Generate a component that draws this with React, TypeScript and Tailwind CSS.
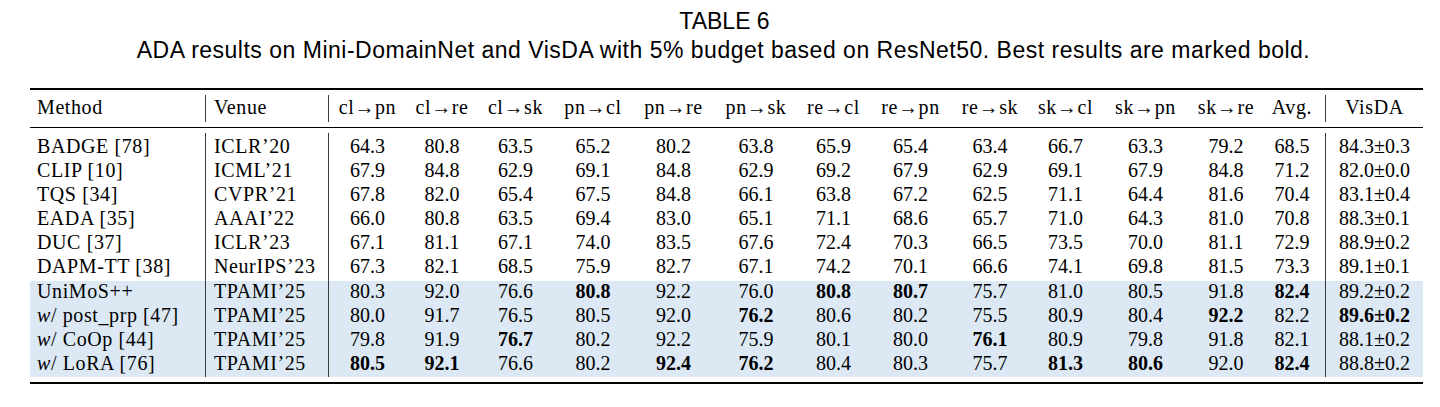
import { ReactNode } from "react";

type Row = {
	method: ReactNode;
	venue: string;
	vals: string[];
	hl?: boolean;
};

const cols =
	"grid grid-cols-[175px_123px_78px_72px_75px_80px_81px_84px_71px_83px_76px_75px_85px_76px_61px_98px]";

const heads = [
	"Method",
	"Venue",
	"cl→pn",
	"cl→re",
	"cl→sk",
	"pn→cl",
	"pn→re",
	"pn→sk",
	"re→cl",
	"re→pn",
	"re→sk",
	"sk→cl",
	"sk→pn",
	"sk→re",
	"Avg.",
	"VisDA",
];

const W = () => <i>w</i>;

// a leading * marks a bold (best) value
const rows: Row[] = [
	{ method: "BADGE [78]", venue: "ICLR’20", vals: "64.3 80.8 63.5 65.2 80.2 63.8 65.9 65.4 63.4 66.7 63.3 79.2 68.5 84.3±0.3".split(" ") },
	{ method: "CLIP [10]", venue: "ICML’21", vals: "67.9 84.8 62.9 69.1 84.8 62.9 69.2 67.9 62.9 69.1 67.9 84.8 71.2 82.0±0.0".split(" ") },
	{ method: "TQS [34]", venue: "CVPR’21", vals: "67.8 82.0 65.4 67.5 84.8 66.1 63.8 67.2 62.5 71.1 64.4 81.6 70.4 83.1±0.4".split(" ") },
	{ method: "EADA [35]", venue: "AAAI’22", vals: "66.0 80.8 63.5 69.4 83.0 65.1 71.1 68.6 65.7 71.0 64.3 81.0 70.8 88.3±0.1".split(" ") },
	{ method: "DUC [37]", venue: "ICLR’23", vals: "67.1 81.1 67.1 74.0 83.5 67.6 72.4 70.3 66.5 73.5 70.0 81.1 72.9 88.9±0.2".split(" ") },
	{ method: "DAPM-TT [38]", venue: "NeurIPS’23", vals: "67.3 82.1 68.5 75.9 82.7 67.1 74.2 70.1 66.6 74.1 69.8 81.5 73.3 89.1±0.1".split(" ") },
	{ method: "UniMoS++", venue: "TPAMI’25", hl: true, vals: "80.3 92.0 76.6 *80.8 92.2 76.0 *80.8 *80.7 75.7 81.0 80.5 91.8 *82.4 89.2±0.2".split(" ") },
	{ method: <><W />/ post_prp [47]</>, venue: "TPAMI’25", hl: true, vals: "80.0 91.7 76.5 80.5 92.0 *76.2 80.6 80.2 75.5 80.9 80.4 *92.2 82.2 *89.6±0.2".split(" ") },
	{ method: <><W />/ CoOp [44]</>, venue: "TPAMI’25", hl: true, vals: "79.8 91.9 *76.7 80.2 92.2 75.9 80.1 80.0 *76.1 80.9 79.8 91.8 82.1 88.1±0.2".split(" ") },
	{ method: <><W />/ LoRA [76]</>, venue: "TPAMI’25", hl: true, vals: "*80.5 *92.1 76.6 80.2 *92.4 *76.2 80.4 80.3 75.7 *81.3 *80.6 92.0 *82.4 88.8±0.2".split(" ") },
];

const cellCls = (i: number) => {
	if (i === 0) return "pl-[7px] text-left whitespace-nowrap";
	if (i === 1) return "border-l border-[#3a3a3a] pl-[8px] text-left whitespace-nowrap";
	if (i === 2 || i === 15) return "border-l border-[#3a3a3a] text-center whitespace-nowrap";
	if (i === 14) return "pr-[5px] text-center whitespace-nowrap";
	return "text-center whitespace-nowrap";
};

const Cell = ({ i, v }: { i: number; v: string }) => {
	const bold = v.startsWith("*");
	return <div className={`${cellCls(i)} ${bold ? "font-bold" : ""}`}>{bold ? v.slice(1) : v}</div>;
};

export default function App() {
	return (
		<div className="w-[1440px] h-[407px] bg-white text-black overflow-hidden">
			<div className="pt-[7px] text-center font-['Liberation_Sans',Arial,sans-serif] text-[23px] leading-[29px]">
				<div className="pl-[9px]">TABLE 6</div>
				<div className="pl-[7px] tracking-[0.5px] whitespace-nowrap">
					ADA results on Mini-DomainNet and VisDA with 5% budget based on ResNet50. Best results are marked bold.
				</div>
			</div>

			<div className="ml-[30px] mt-[23px] w-[1393px] font-['Liberation_Serif','Times_New_Roman',serif] text-[20px] leading-[20px]">
				<div className="h-[2px] bg-black" />
				<div className="py-[5px]">
					<div className={`${cols} h-[27px] tracking-[0.6px]`}>
						{heads.map((h, i) => (
							<div key={h} className={`${cellCls(i)} pt-[1.5px]`}>
								{h}
							</div>
						))}
					</div>
				</div>
				<div className="h-[1px] bg-black" />

				<div className="pt-[5px]">
					<div className={`${cols} h-[2.5px]`}>
						{heads.map((h, i) => (
							<div key={h} className={cellCls(i)} />
						))}
					</div>
					{rows.map((r, ri) => (
						<div key={ri} className={`${cols} h-[24.2px] ${r.hl ? "bg-[#dce9f5]" : ""}`}>
							<div className={`${cellCls(0)} tracking-[0.6px]`}>{r.method}</div>
							<div className={`${cellCls(1)} tracking-[0.6px]`}>{r.venue}</div>
							{r.vals.map((v, vi) => (
								<Cell key={vi} i={vi + 2} v={v} />
							))}
						</div>
					))}
				</div>
				<div className="mt-[5px] h-[2px] bg-black" />
			</div>
		</div>
	);
}
